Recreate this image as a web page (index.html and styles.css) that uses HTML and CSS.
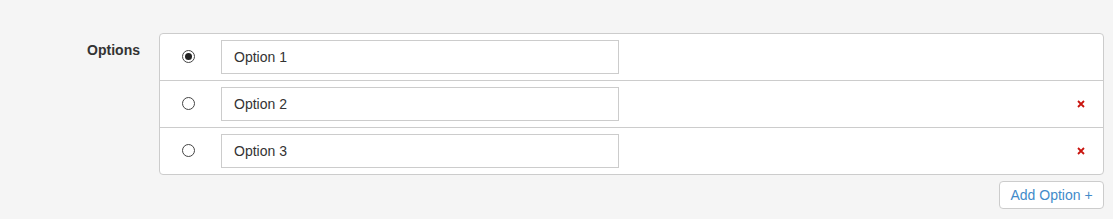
FILE: index.html
```html
<!DOCTYPE html>
<html lang="en">
  <head>
    <meta charset="UTF-8" />
    <title>Options</title>
    <link rel="stylesheet" href="styles.css">
  </head>
  <body>
    <div class="form-row">
      <label class="field-label">Options</label>
      <div class="field">
        <div class="panel">
          <div class="option-row">
            <span class="radio checked"></span>
            <input class="option-input" type="text" value="Option 1" />
          </div>
          <div class="option-row">
            <span class="radio"></span>
            <input class="option-input" type="text" value="Option 2" />
            <span class="remove">
              <svg width="8" height="8" viewBox="0 0 8 8"><path d="M1 1L7 7M7 1L1 7" stroke="#c9140e" stroke-width="1.8" fill="none"/></svg>
            </span>
          </div>
          <div class="option-row">
            <span class="radio"></span>
            <input class="option-input" type="text" value="Option 3" />
            <span class="remove">
              <svg width="8" height="8" viewBox="0 0 8 8"><path d="M1 1L7 7M7 1L1 7" stroke="#c9140e" stroke-width="1.8" fill="none"/></svg>
            </span>
          </div>
        </div>
        <div class="actions">
          <button class="add-button">Add Option +</button>
        </div>
      </div>
    </div>
  </body>
</html>
```

FILE: styles.css
```css
body {
  margin: 0;
  background-color: #f5f5f5;
  font-family: "Liberation Sans", Arial, sans-serif;
  color: #333;
}
.form-row {
  display: flex;
  padding-top: 33px;
}
.field-label {
  width: 140px;
  text-align: right;
  font-weight: bold;
  font-size: 14px;
  padding-top: 9px;
}
.field {
  margin-left: 19px;
  width: 945px;
}
.panel {
  background-color: white;
  border: 1px solid #ccc;
  border-radius: 4px;
}
.option-row {
  display: flex;
  align-items: center;
  height: 46px;
}
.option-row + .option-row {
  border-top: 1px solid #ccc;
}
.radio {
  box-sizing: border-box;
  width: 13px;
  height: 13px;
  margin-left: 22px;
  margin-right: 26px;
  margin-bottom: 2px;
  border: 1px solid #444;
  border-radius: 50%;
  display: flex;
  align-items: center;
  justify-content: center;
}
.radio.checked::after {
  content: "";
  width: 7px;
  height: 7px;
  border-radius: 50%;
  background-color: #222;
}
.option-input {
  box-sizing: border-box;
  width: 398px;
  height: 34px;
  border: 1px solid #ccc;
  padding: 0 12px;
  font-family: "Liberation Sans", Arial, sans-serif;
  font-size: 14px;
  color: #333;
  background-color: white;
}
.remove {
  margin-left: auto;
  margin-right: 18px;
  display: flex;
}
.actions {
  display: flex;
  justify-content: flex-end;
  margin-top: 6px;
}
.add-button {
  box-sizing: border-box;
  width: 105px;
  height: 28px;
  border: 1px solid #ccc;
  border-radius: 4px;
  background-color: white;
  color: #428bca;
  font-family: "Liberation Sans", Arial, sans-serif;
  font-size: 14px;
  padding: 0;
}
```
